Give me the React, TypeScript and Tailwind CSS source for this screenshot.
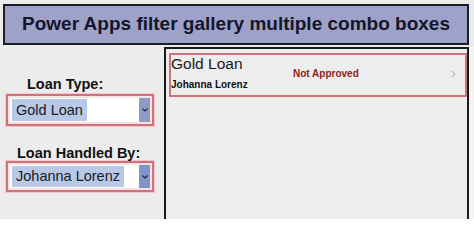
import React from 'react';

function Combo({ value, hiWidth, arrowBg }: { value: string; hiWidth: string; arrowBg: string }) {
  return (
    <div className="ml-[6px] h-full w-[148px] border-2 border-[#d0707a] bg-[#f3e3e4] p-[2px] shadow-[0_0_0_1px_#f2c9cc]">
      <div className="flex h-full bg-white">
        <div className="flex flex-1 items-stretch py-[1px] pl-[2px]">
          <span className={`flex items-center whitespace-nowrap bg-[#b7c8e8] px-[4px] text-[14.5px] leading-none text-[#1b1b1b] ${hiWidth}`}>
            {value}
          </span>
        </div>
        <div className={`flex w-[11px] items-center justify-center ${arrowBg}`}>
          <svg width="6" height="4" viewBox="0 0 6 4">
            <polyline points="0.5,0.5 3,3 5.5,0.5" fill="none" stroke="#1e2440" strokeWidth="1.1" />
          </svg>
        </div>
      </div>
    </div>
  );
}

export default function App() {
  return (
    <div className="h-[219px] w-[474px] overflow-hidden bg-[#ececec] pt-[4px] font-['Liberation_Sans',Arial,sans-serif]">
      <div className="ml-[3px] flex h-[41px] w-[466px] items-center justify-center border-2 border-[#1c1c28] bg-[#9ea2c8] text-[19px] font-bold text-[#14142a]">
        Power Apps filter gallery multiple combo boxes
      </div>

      <div className="mt-[2px] flex">
        <div className="w-[164px]">
          <div className="ml-[27px] mt-[29px] text-[14.5px] font-bold leading-[17px] text-[#111]">
            Loan Type:
          </div>
          <div className="mt-[1px] h-[32px]">
            <Combo value="Gold Loan" hiWidth="w-[75px]" arrowBg="bg-[#8f9bc5]" />
          </div>
          <div className="ml-[17px] mt-[19px] text-[14.5px] font-bold leading-[16px] text-[#111]">
            Loan Handled By:
          </div>
          <div className="h-[31px]">
            <Combo value="Johanna Lorenz" hiWidth="w-[112px]" arrowBg="bg-[#7f95cc]" />
          </div>
        </div>

        <div className="h-[180px] w-[305px] border-x-2 border-t-2 border-[#1a1a1a] bg-[#ededed]">
          <div className="ml-[3px] mt-[4px] flex h-[44px] w-[298px] items-center border-2 border-[#c9757b]">
            <div className="flex h-full w-[122px] flex-col">
              <div className="whitespace-nowrap text-[15.5px] leading-[18px] text-[#1a1a1a]">Gold Loan</div>
              <div className="mt-[6px] whitespace-nowrap text-[10px] font-bold leading-[12px] text-[#111]">Johanna Lorenz</div>
            </div>
            <div className="-mt-[2px] whitespace-nowrap text-[10px] font-bold leading-[12px] text-[#8b1c1c]">Not Approved</div>
            <div className="ml-auto mr-[9px] -mt-[2px] flex items-center">
              <svg width="5" height="8" viewBox="0 0 5 8">
                <polyline points="0.8,0.8 4,4 0.8,7.2" fill="none" stroke="#a0a0a0" strokeWidth="1" />
              </svg>
            </div>
          </div>
        </div>
        <div className="flex-1 bg-[#f4f4f4]" />
      </div>
    </div>
  );
}
